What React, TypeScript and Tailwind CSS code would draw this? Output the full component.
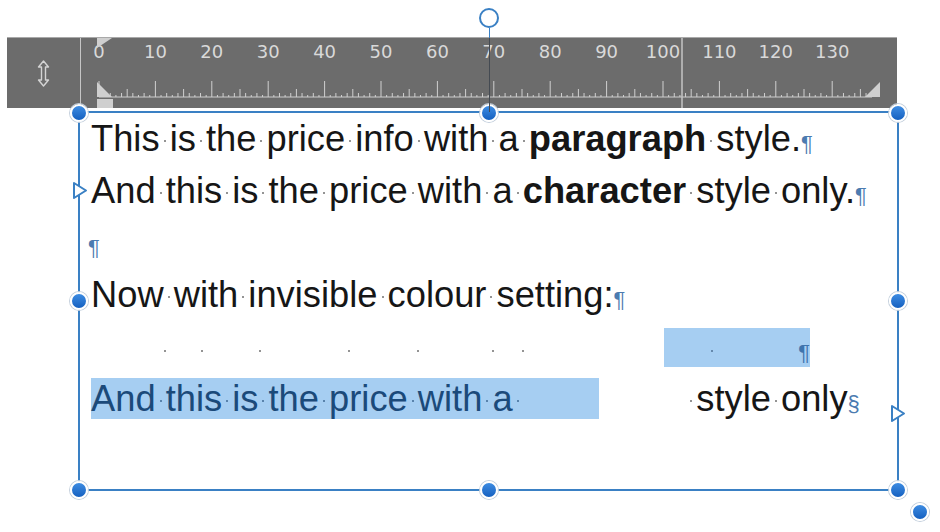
import React from "react";

const ticks = Array.from({ length: 139 }, (_, u) => u);
const labels = Array.from({ length: 14 }, (_, i) => i * 10);
const tickX = (u: number) => 99 + u * 5.64;

const tickHeight = (u: number) => {
  if (u % 10 === 0) return 16;
  if (u % 5 === 0) return 8;
  if (u % 2 === 0) return 4;
  return 2;
};

// space marker: keeps the width of a space, shows a small dot
const Sp = ({ dark }: { dark?: boolean }) => (
  <span className="inline-block w-[0.278em] h-[0.3em]">
    <span
      className={`block mx-auto w-[2px] h-[2px] rounded-full ${
        dark ? "bg-[#3f6a94]" : "bg-[#707070]"
      }`}
    />
  </span>
);

const Words = ({ text, dark }: { text: string; dark?: boolean }) => {
  const parts = text.split(" ");
  return (
    <>
      {parts.map((w, i) => (
        <React.Fragment key={i}>
          {w}
          {i < parts.length - 1 && <Sp dark={dark} />}
        </React.Fragment>
      ))}
    </>
  );
};

const Mark = ({ children }: { children: React.ReactNode }) => (
  <span className="text-[22px] text-[#4c7bb0] leading-none">{children}</span>
);

const Handle = ({ className }: { className: string }) => (
  <div
    className={`absolute w-[18px] h-[18px] rounded-full border-2 border-white bg-linear-to-b from-[#3d8ce2] to-[#1460c0] shadow-[0_0_0_1px_#c3cfdc] ${className}`}
  />
);

const Port = ({ className }: { className: string }) => (
  <svg className={`absolute ${className}`} width="16" height="19" viewBox="0 0 16 19">
    <polygon points="2,2 14,9.5 2,17" fill="white" stroke="#3a80c4" strokeWidth="2" strokeLinejoin="round" />
  </svg>
);

function Ruler() {
  return (
    <div className="flex w-[890px] h-[71px] bg-[#6c6c6c] border-t border-[#a9a9a9]">
      <div className="w-[74px] flex items-center justify-center border-r border-[#c6c6c6]">
        <svg width="13" height="27" viewBox="0 0 13 27">
          <path
            d="M6.5 1 L11.5 7 L8.5 7 L8.5 20 L11.5 20 L6.5 26 L1.5 20 L4.5 20 L4.5 7 L1.5 7 Z"
            fill="none"
            stroke="#d4d4d4"
            strokeWidth="1.4"
            strokeLinejoin="round"
          />
        </svg>
      </div>
      <svg width="816" height="70" viewBox="81 38 816 70" className="block">
        {labels.map((u) => (
          <text
            key={u}
            x={tickX(u)}
            y={58}
            textAnchor="middle"
            fontSize="18"
            fill="#d9d9d9"
            fontFamily="'DejaVu Sans', sans-serif"
          >
            {u}
          </text>
        ))}
        <line x1="99" y1="97" x2="872" y2="97" stroke="#cdcdcd" strokeWidth="1" />
        {ticks.map((u) => (
          <line
            key={u}
            x1={tickX(u)}
            x2={tickX(u)}
            y1={97 - tickHeight(u)}
            y2={97}
            stroke="#d0d0d0"
            strokeWidth="1"
          />
        ))}
        <line x1="682" y1="38" x2="682" y2="108" stroke="#c4c4c4" strokeWidth="1.5" />
        <polygon points="97,38 112,38 97,48" fill="#cfcfcf" />
        <polygon points="97,82 97,97 112,97" fill="#cfcfcf" />
        <rect x="97" y="99" width="16" height="9" fill="#cfcfcf" />
        <polygon points="880,82 880,97 865,97" fill="#cfcfcf" />
      </svg>
    </div>
  );
}

const dotMargins = ["ml-[73px]", "ml-[35px]", "ml-[56px]", "ml-[87px]", "ml-[67px]", "ml-[73px]", "ml-[28px]"];

export default function App() {
  return (
    <div className="relative w-[940px] h-[532px] bg-white overflow-hidden font-['Liberation_Sans',Arial,sans-serif]">
      <div className="pt-[37px] pl-[7px]">
        <Ruler />

        <div className="relative ml-[71px] mt-[3px] w-[821px] h-[380px] border-2 border-[#3a80c4]">
          <div className="pl-[11px] text-[36.3px] leading-[52px] text-[#161616] whitespace-nowrap">
            <div>
              <Words text="This is the price info with a " />
              <b>paragraph</b>
              <Sp />
              style.
              <Mark>¶</Mark>
            </div>
            <div>
              <Words text="And this is the price with a " />
              <b>character</b>
              <Sp />
              <Words text="style only." />
              <Mark>¶</Mark>
            </div>
            <div className="-ml-[3px]">
              <Mark>¶</Mark>
            </div>
            <div>
              <Words text="Now with invisible colour setting:" />
              <Mark>¶</Mark>
            </div>
            <div className="flex h-[52px]">
              <div className="flex w-[573px] pt-[29px]">
                {dotMargins.map((m, i) => (
                  <span key={i} className={`${m} w-[2px] h-[2px] rounded-full bg-[#707070]`} />
                ))}
              </div>
              <div className="mt-[7px] h-[39px] w-[146px] bg-[#a6cef2] flex">
                <span className="ml-[47px] mt-[22px] w-[2px] h-[2px] rounded-full bg-[#4f7296]" />
                <span className="ml-auto mt-[14px] text-[22px] leading-none text-[#3f74ad]">¶</span>
              </div>
            </div>
            <div>
              <span className="bg-[#a6cef2] text-[#1b4a7a]">
                <Words text="And this is the price with a " dark />
                <b className="text-transparent">char</b>
              </span>
              <b className="text-transparent">acter</b>
              <Sp />
              <Words text="style only" />
              <Mark>§</Mark>
            </div>
          </div>

          <Handle className="left-[-10px] top-[-9px]" />
          <Handle className="left-[400px] top-[-9px]" />
          <Handle className="left-[809px] top-[-9px]" />
          <Handle className="left-[-10px] top-[179px]" />
          <Handle className="left-[809px] top-[179px]" />
          <Handle className="left-[-10px] top-[368px]" />
          <Handle className="left-[400px] top-[368px]" />
          <Handle className="left-[809px] top-[368px]" />
          <Handle className="left-[831px] top-[390px]" />

          <Port className="left-[-8px] top-[68px]" />
          <Port className="left-[810px] top-[291px]" />
        </div>
      </div>

      {/* rotation handle */}
      <div className="absolute left-[488.5px] top-[28px] w-px h-[10px] bg-[#3a80c4]" />
      <div className="absolute left-[488.5px] top-[38px] w-px h-[74px] bg-[#444a52]" />
      <div className="absolute left-[479px] top-[8px] w-[20px] h-[20px] rounded-full border-2 border-[#3a80c4] bg-white" />
    </div>
  );
}
